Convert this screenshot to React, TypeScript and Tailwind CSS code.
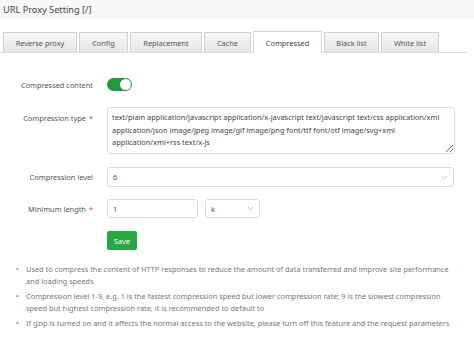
import React from 'react';

const tabs = ['Reverse proxy', 'Config', 'Replacement', 'Cache', 'Compressed', 'Black list', 'White list'];
const tabWidths = ['w-[74px]', 'w-[49px]', 'w-[72px]', 'w-[47px]', 'w-[69px]', 'w-[55px]', 'w-[58px]'];

const notes = [
  'Used to compress the content of HTTP responses to reduce the amount of data transferred and improve site performance and loading speeds',
  'Compression level 1-9, e.g. 1 is the fastest compression speed but lower compression rate; 9 is the slowest compression speed but highest compression rate, it is recommended to default to',
  'If gzip is turned on and it affects the normal access to the website, please turn off this feature and the request parameters',
];

const Chevron: React.FC = () => (
  <svg width="7" height="5" viewBox="0 0 7 5" className="shrink-0">
    <path d="M1 1.2 L3.5 3.6 L6 1.2" fill="none" stroke="#b5b5b5" strokeWidth="0.9" />
  </svg>
);

const Label: React.FC<{ text: string; required?: boolean; className?: string }> = ({ text, required, className }) => (
  <div className={`w-[95px] shrink-0 text-right pr-[2px] text-[#555] ${className ?? ''}`}>
    {text}
    {required && <span className="text-[#e2403c] ml-[3px]">*</span>}
  </div>
);

export default function App() {
  return (
    <div className="w-[474px] h-[348px] bg-white overflow-hidden text-[7.4px] leading-[12px] text-[#444] font-['Noto_Sans','Open_Sans',sans-serif]">
      {/* Title */}
      <div className="h-[19px] bg-[#f8f8f8] flex items-center px-[3px] text-[9.2px] text-[#444]">
        URL Proxy Setting [/]
      </div>

      {/* Tabs */}
      <div className="mt-[12px] w-[467px] flex items-end gap-[2px] pl-[3px] border-b border-[#dcdcdc]">
        {tabs.map((t, i) =>
          t === 'Compressed' ? (
            <div
              key={t}
              className={`${tabWidths[i]} h-[22px] -mb-px bg-white border border-b-0 border-[#d4d4d4] flex items-center justify-center text-[#444]`}
            >
              {t}
            </div>
          ) : (
            <div
              key={t}
              className={`${tabWidths[i]} h-[20px] bg-gradient-to-b from-[#f6f6f6] to-[#e6e6e6] border border-[#d0d0d0] border-b-0 flex items-center justify-center text-[#555]`}
            >
              {t}
            </div>
          )
        )}
      </div>

      {/* Form */}
      <div className="flex flex-col mt-[25px]">
        <div className="flex items-center gap-[12px] h-[13px]">
          <Label text="Compressed content" />
          <div className="w-[25px] h-[13px] rounded-full bg-[#1f9a3f] flex items-center justify-end pr-[1px]">
            <div className="w-[11px] h-[11px] rounded-full bg-white" />
          </div>
        </div>

        <div className="flex gap-[12px] mt-[16px]">
          <Label text="Compression type" required className="pt-[5px]" />
          <textarea
            readOnly
            defaultValue="text/plain application/javascript application/x-javascript text/javascript text/css application/xml application/json image/jpeg image/gif image/png font/ttf font/otf image/svg+xml application/xml+rss text/x-js"
            className="w-[348px] h-[47px] border border-[#dcdcdc] rounded-[3px] px-[4px] py-[3px] text-[7.4px] leading-[12.5px] text-[#444] outline-none resize-y"
          />
        </div>

        <div className="flex items-center gap-[12px] mt-[13px]">
          <Label text="Compression level" />
          <div className="w-[347px] h-[20px] border border-[#dcdcdc] rounded-[3px] flex items-center justify-between px-[5px] text-[#555]">
            <span>6</span>
            <Chevron />
          </div>
        </div>

        <div className="flex items-center gap-[12px] mt-[12px]">
          <Label text="Minimum length" required />
          <div className="w-[91px] h-[19px] border border-[#dcdcdc] rounded-[3px] flex items-center px-[5px] text-[#555]">1</div>
          <div className="w-[55px] h-[19px] -ml-[5px] border border-[#dcdcdc] rounded-[3px] flex items-center justify-between px-[5px] text-[#555]">
            <span>k</span>
            <Chevron />
          </div>
        </div>

        <div className="flex gap-[12px] mt-[13px]">
          <div className="w-[95px] shrink-0" />
          <button className="w-[30px] h-[19px] rounded-[2px] bg-[#27a844] text-white text-[7.4px] flex items-center justify-center">
            Save
          </button>
        </div>
      </div>

      {/* Notes */}
      <ul className="mt-[13px] pl-[16px] pr-[14px] flex flex-col gap-[3px] text-[#777] text-[7.4px] leading-[12px]">
        {notes.map((n) => (
          <li key={n} className="flex">
            <span className="w-[10px] shrink-0">•</span>
            <span>{n}</span>
          </li>
        ))}
      </ul>
    </div>
  );
}
